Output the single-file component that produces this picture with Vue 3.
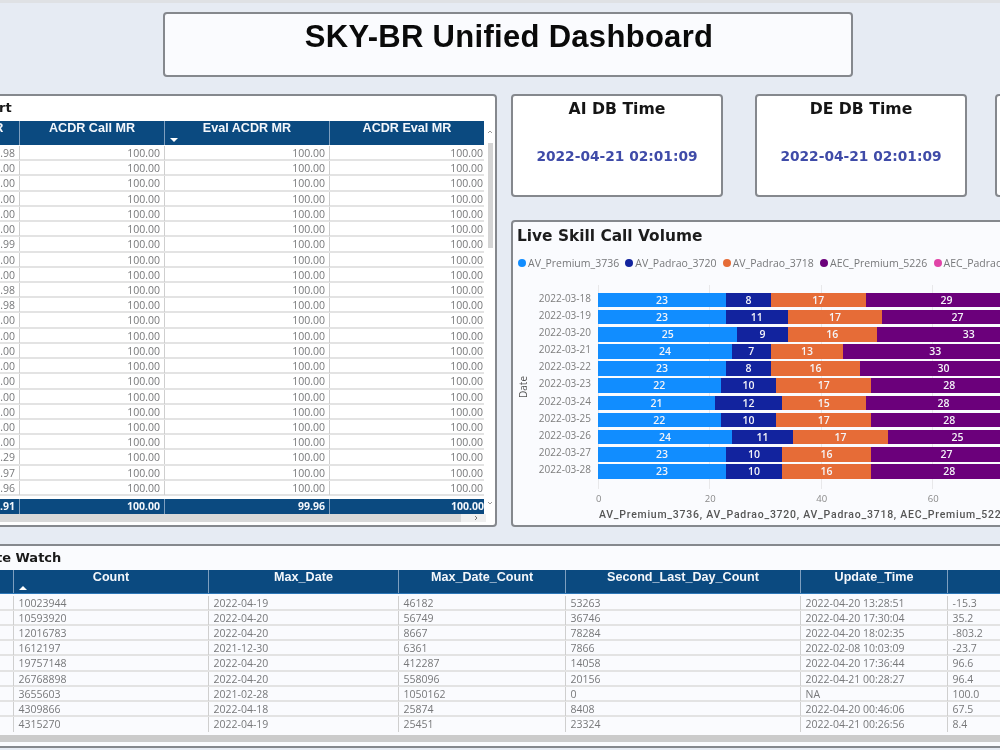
<script setup>
const mrEnds = ['99.98','100.00','100.00','100.00','100.00','100.00','99.99','100.00','100.00','99.98','99.98','100.00','100.00','100.00','100.00','100.00','100.00','100.00','100.00','100.00','99.29','99.97','99.96']
const series = [
  { name: 'AV_Premium_3736', color: '#118dff' },
  { name: 'AV_Padrao_3720', color: '#12239e' },
  { name: 'AV_Padrao_3718', color: '#e66c37' },
  { name: 'AEC_Premium_5226', color: '#6b007b' },
  { name: 'AEC_Padrao_5225', color: '#e044a7' }
]
const unit = 5.575
const chartRows = [
  ['2022-03-18', [23, 8, 17, 29]],
  ['2022-03-19', [23, 11, 17, 27]],
  ['2022-03-20', [25, 9, 16, 33]],
  ['2022-03-21', [24, 7, 13, 33]],
  ['2022-03-22', [23, 8, 16, 30]],
  ['2022-03-23', [22, 10, 17, 28]],
  ['2022-03-24', [21, 12, 15, 28]],
  ['2022-03-25', [22, 10, 17, 28]],
  ['2022-03-26', [24, 11, 17, 25]],
  ['2022-03-27', [23, 10, 16, 27]],
  ['2022-03-28', [23, 10, 16, 28]]
]
const watchHeads = ['', 'Count', 'Max_Date', 'Max_Date_Count', 'Second_Last_Day_Count', 'Update_Time', '']
const watchRows = [
  ['10023944', '2022-04-19', '46182', '53263', '2022-04-20 13:28:51', '-15.3'],
  ['10593920', '2022-04-20', '56749', '36746', '2022-04-20 17:30:04', '35.2'],
  ['12016783', '2022-04-20', '8667', '78284', '2022-04-20 18:02:35', '-803.2'],
  ['1612197', '2021-12-30', '6361', '7866', '2022-02-08 10:03:09', '-23.7'],
  ['19757148', '2022-04-20', '412287', '14058', '2022-04-20 17:36:44', '96.6'],
  ['26768898', '2022-04-20', '558096', '20156', '2022-04-21 00:28:27', '96.4'],
  ['3655603', '2021-02-28', '1050162', '0', 'NA', '100.0'],
  ['4309866', '2022-04-18', '25874', '8408', '2022-04-20 00:46:06', '67.5'],
  ['4315270', '2022-04-19', '25451', '23324', '2022-04-21 00:26:56', '8.4']
]
</script>

<template>
  <div class="page">
    <header class="title-card"><h1>SKY-BR Unified Dashboard</h1></header>

    <div class="middle">
      <section class="panel report">
        <h2 class="report-title">Report</h2>
        <div class="report-body">
          <div class="report-table">
            <div class="rt-row rt-head">
              <div class="rt-cell">ACDR MR</div>
              <div class="rt-cell">ACDR Call MR</div>
              <div class="rt-cell sorted">Eval ACDR MR<i class="sort-down"></i></div>
              <div class="rt-cell">ACDR Eval MR</div>
            </div>
            <div class="rt-rows">
              <div v-for="(v, i) in mrEnds" :key="i" class="rt-row rt-data">
                <div class="rt-cell">{{ v }}</div>
                <div class="rt-cell">100.00</div>
                <div class="rt-cell">100.00</div>
                <div class="rt-cell">100.00</div>
              </div>
            </div>
            <div class="rt-row rt-total">
              <div class="rt-cell">99.91</div>
              <div class="rt-cell">100.00</div>
              <div class="rt-cell">99.96</div>
              <div class="rt-cell">100.00</div>
            </div>
          </div>
          <div class="vbar">
            <svg class="chev" width="6" height="6" viewBox="0 0 6 6"><path d="M1 4 3 2l2 2" fill="none" stroke="#999" /></svg>
            <div class="vthumb"></div>
            <svg class="chev chev-down" width="6" height="6" viewBox="0 0 6 6"><path d="M1 2 3 4l2-2" fill="none" stroke="#999" /></svg>
          </div>
        </div>
        <div class="hbar">
          <div class="hthumb"></div>
          <svg width="6" height="6" viewBox="0 0 6 6"><path d="M2 1l2 2-2 2" fill="none" stroke="#777" /></svg>
        </div>
      </section>

      <div class="right">
        <div class="cards">
          <section class="panel card"><h3>AI DB Time</h3><p>2022-04-21 02:01:09</p></section>
          <section class="panel card"><h3>DE DB Time</h3><p>2022-04-21 02:01:09</p></section>
          <section class="panel card third"></section>
        </div>

        <section class="panel chart">
          <h2 class="chart-title">Live Skill Call Volume</h2>
          <ul class="legend">
            <li v-for="s in series" :key="s.name">
              <i :style="{ background: s.color }"></i>{{ s.name }}
            </li>
          </ul>
          <div class="plot-wrap">
            <div class="axis-y">Date</div>
            <div class="labels">
              <span v-for="r in chartRows" :key="r[0]">{{ r[0] }}</span>
            </div>
            <div class="plot">
              <div v-for="r in chartRows" :key="r[0]" class="bar">
                <span
                  v-for="(n, j) in r[1]"
                  :key="j"
                  class="seg"
                  :style="{ width: n * unit + 'px', background: series[j].color }"
                >{{ n }}</span>
                <span class="seg" :style="{ width: '60px', background: series[4].color }"></span>
              </div>
            </div>
          </div>
          <div class="ticks"><span>0</span><span>20</span><span>40</span><span>60</span></div>
          <div class="axis-x">AV_Premium_3736, AV_Padrao_3720, AV_Padrao_3718, AEC_Premium_5226, AEC_Padrao_5225</div>
        </section>
      </div>
    </div>

    <section class="panel watch">
      <h2 class="watch-title">Update Watch</h2>
      <div class="wt-row wt-head">
        <div v-for="(h, i) in watchHeads" :key="i" class="wt-cell">
          {{ h }}<i v-if="h === 'Count'" class="sort-up"></i>
        </div>
      </div>
      <div v-for="(r, i) in watchRows" :key="i" class="wt-row wt-data">
        <div class="wt-cell"></div>
        <div v-for="(c, j) in r" :key="j" class="wt-cell">{{ c }}</div>
      </div>
      <div class="watch-bar"></div>
    </section>
  </div>
</template>

<style>
html, body { margin: 0; overflow: hidden; background: #e6ebf3; }
</style>

<style scoped>
.page {
  width: 1000px;
  height: 750px;
  overflow: hidden;
  box-sizing: border-box;
  border-top: 3px solid #dfe1e4;
  background: #e6ebf3;
  font-family: "Open Sans", "Liberation Sans", sans-serif;
  filter: blur(0.55px);
}
h1, h2, h3, p, ul { margin: 0; padding: 0; }
.panel {
  box-sizing: border-box;
  background: #fafbfe;
  border: 2px solid #85888d;
  border-radius: 4px;
  overflow: hidden;
}
.title-card {
  box-sizing: border-box;
  width: 690px;
  height: 65px;
  margin: 9px 0 0 163px;
  padding-left: 2px;
  background: #fafbfe;
  border: 2px solid #85888d;
  border-radius: 4px;
  text-align: center;
}
h1 {
  font: 700 31px/1 "Liberation Sans", sans-serif;
  color: #0a0a0a;
  margin-top: 7px;
  letter-spacing: 0.3px;
}
.middle {
  display: flex;
  margin: 17px 0 0 -60px;
  gap: 14px;
}
.report {
  flex: none;
  width: 557px;
  height: 433px;
  background: #fff;
}
.report-title {
  font: 700 13px/23px "DejaVu Sans", sans-serif;
  color: #1a1a1a;
  height: 25px;
  padding-left: 20px;
}
.report-body { display: flex; }
.report-table { width: 542px; flex: none; }
.rt-row {
  display: grid;
  grid-template-columns: 78px 145px 165px 154px;
}
.rt-cell { box-sizing: border-box; border-right: 1px solid #cfcfcf; }
.rt-cell:last-child { border-right: 0; }
.rt-head {
  height: 24px;
  background: #0b4a80;
  color: #f4f7fb;
  font: 700 12.6px/15px "Liberation Sans", sans-serif;
  text-align: center;
}
.rt-head .rt-cell { border-right-color: #7e9fbf; }
.rt-head .rt-cell:first-child { padding-right: 14px; }
.sorted { position: relative; }
.sort-down, .sort-up {
  position: absolute;
  left: 5px;
  bottom: 3px;
  width: 0;
  height: 0;
  border-left: 4px solid transparent;
  border-right: 4px solid transparent;
}
.sort-down { border-top: 4px solid #fff; }
.sort-up { border-bottom: 4px solid #fff; }
.rt-rows { padding-top: 1px; }
.rt-data {
  height: 15.23px;
  box-sizing: border-box;
  border-bottom: 2px solid #e3e3e3;
  font-size: 10.5px;
  line-height: 14px;
  color: #77787a;
  text-align: right;
}
.rt-data .rt-cell { padding-right: 4px; }
.rt-data .rt-cell:last-child { padding-right: 1px; }
.rt-total {
  height: 15px;
  margin-top: 3px;
  background: #0b4a80;
  color: #f4f7fb;
  font-size: 10.5px;
  font-weight: 700;
  line-height: 15px;
  text-align: right;
}
.rt-total .rt-cell { padding-right: 4px; border-right-color: #7e9fbf; }
.rt-total .rt-cell:last-child { padding-right: 0; }
.vbar {
  flex: 1;
  display: flex;
  flex-direction: column;
  align-items: center;
  padding-left: 1px;
  box-sizing: border-box;
}
.chev { flex: none; margin-top: 8px; }
.vthumb {
  width: 5px;
  height: 105px;
  margin-top: 8px;
  background: #d4d4d4;
}
.chev-down { margin-top: 252px; }
.hbar {
  display: flex;
  align-items: center;
  width: 544px;
  height: 8px;
  background: #f0f0f0;
}
.hthumb { width: 519px; height: 8px; background: #d9d9d9; margin-right: 12px; }
.right { flex: none; width: 700px; }
.cards { display: flex; gap: 32px; }
.card {
  flex: none;
  width: 212px;
  height: 103px;
  background: #fff;
  text-align: center;
}
.third { margin-left: -4px; }
.card h3 {
  font: 700 15.7px/18px "DejaVu Sans", sans-serif;
  color: #151515;
  margin-top: 4px;
}
.card p {
  font: 700 13.75px/18px "DejaVu Sans", sans-serif;
  color: #3f4ba8;
  margin-top: 29px;
}
.chart {
  height: 307px;
  margin-top: 23px;
  padding: 0 0 0 4px;
}
.chart-title {
  font: 700 15.4px/18px "DejaVu Sans", sans-serif;
  color: #1c1c1c;
  margin-top: 5px;
}
.legend {
  display: flex;
  list-style: none;
  margin: 11px 0 0 1px;
  height: 14px;
  font-size: 10.5px;
  line-height: 14px;
  color: #77787a;
  white-space: nowrap;
}
.legend li { display: flex; align-items: center; margin-right: 6.2px; }
.legend i {
  width: 8px;
  height: 8px;
  border-radius: 50%;
  margin-right: 2px;
}
.plot-wrap { display: flex; margin-top: 14.7px; }
.axis-y {
  width: 13px;
  align-self: center;
  writing-mode: vertical-rl;
  transform: rotate(180deg);
  font-size: 10px;
  line-height: 12px;
  color: #555;
  text-align: center;
}
.labels {
  width: 68px;
  box-sizing: border-box;
  padding: 6px 7px 0 0;
  display: flex;
  flex-direction: column;
  text-align: right;
}
.labels span {
  height: 17.16px;
  font-size: 10px;
  line-height: 14px;
  color: #7d7d7d;
  white-space: nowrap;
}
.plot {
  flex: none;
  width: 420px;
  padding: 8px 0;
  background-image: repeating-linear-gradient(90deg, #e8e8ea 0 1px, transparent 1px 111.5px);
}
.bar { display: flex; height: 14.6px; margin-bottom: 2.56px; }
.seg {
  flex: none;
  color: #f4f4f8;
  font-size: 10.5px;
  font-weight: 600;
  line-height: 15px;
  text-align: center;
}
.ticks {
  display: flex;
  margin: 2.5px 0 0 26px;
  height: 14px;
  font-size: 9.5px;
  line-height: 14px;
  color: #8a8a8a;
}
.ticks span { width: 111.5px; text-align: center; flex: none; }
.axis-x {
  margin: 2px 0 0 82px;
  font: 500 10.5px/14px Roboto, sans-serif;
  color: #555;
  letter-spacing: 0.76px;
  white-space: nowrap;
}
.watch {
  width: 1120px;
  height: 204px;
  margin: 17px 0 0 -60px;
}
.watch-title {
  font: 700 13px/24px "DejaVu Sans", sans-serif;
  color: #1a1a1a;
  height: 24px;
  padding-left: 16px;
}
.wt-row {
  display: grid;
  grid-template-columns: 72px 195px 190px 167px 235px 147px 120px;
}
.wt-cell { box-sizing: border-box; border-right: 1px solid #cfcfcf; position: relative; }
.wt-head {
  height: 24px;
  background: #0b4a80;
  border-bottom: 1px solid #2e78b8;
  box-sizing: border-box;
  color: #f4f7fb;
  font: 700 12.6px/15px "Liberation Sans", sans-serif;
  text-align: center;
}
.wt-head .wt-cell { border-right-color: #7e9fbf; }
.wt-data {
  height: 15.23px;
  box-sizing: border-box;
  border-bottom: 2px solid #e3e3e3;
  font-size: 10.5px;
  line-height: 14px;
  color: #77787a;
  white-space: nowrap;
}
.wt-head + .wt-data { margin-top: 1.5px; }
.wt-data .wt-cell { padding-left: 4.5px; }
.wt-data:nth-last-child(2) { border-bottom: 0; }
.watch-bar {
  height: 7px;
  margin-top: 3px;
  background: #cbcbcb;
}
</style>
